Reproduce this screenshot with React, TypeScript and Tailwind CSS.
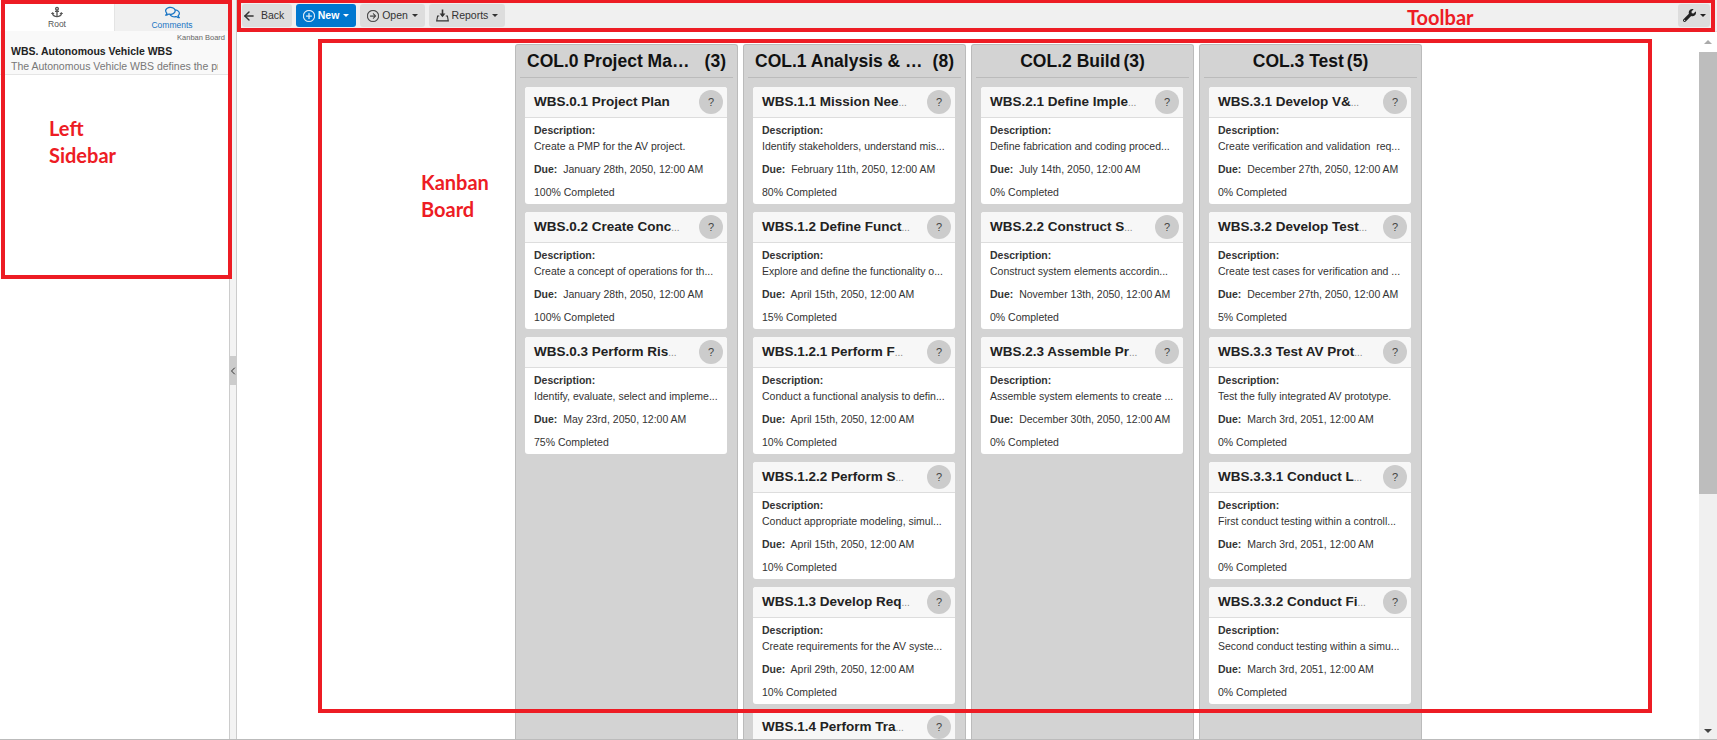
import React from "react";
import { ArrowLeft, ChevronLeft } from "lucide-react";
import { BsArrowRightCircle, BsPlusCircle } from "react-icons/bs";
import { FaAnchor, FaRegComments, FaWrench } from "react-icons/fa";

type CardData = {
    title: string;
    clipped?: boolean;
    description?: string;
    due?: string;
    percent?: number;
};

type ColumnData = {
    title: string;
    count: number;
    long?: boolean;
    cards: CardData[];
};

const columns: ColumnData[] = [
    {
        title: "COL.0 Project Ma…",
        count: 3,
        long: true,
        cards: [
            { title: "WBS.0.1 Project Plan", description: "Create a PMP for the AV project.", due: "January 28th, 2050, 12:00 AM", percent: 100 },
            { title: "WBS.0.2 Create Conc", clipped: true, description: "Create a concept of operations for th...", due: "January 28th, 2050, 12:00 AM", percent: 100 },
            { title: "WBS.0.3 Perform Ris", clipped: true, description: "Identify, evaluate, select and impleme...", due: "May 23rd, 2050, 12:00 AM", percent: 75 },
        ],
    },
    {
        title: "COL.1 Analysis & …",
        count: 8,
        long: true,
        cards: [
            { title: "WBS.1.1 Mission Nee", clipped: true, description: "Identify stakeholders, understand mis...", due: "February 11th, 2050, 12:00 AM", percent: 80 },
            { title: "WBS.1.2 Define Funct", clipped: true, description: "Explore and define the functionality o...", due: "April 15th, 2050, 12:00 AM", percent: 15 },
            { title: "WBS.1.2.1 Perform F", clipped: true, description: "Conduct a functional analysis to defin...", due: "April 15th, 2050, 12:00 AM", percent: 10 },
            { title: "WBS.1.2.2 Perform S", clipped: true, description: "Conduct appropriate modeling, simul...", due: "April 15th, 2050, 12:00 AM", percent: 10 },
            { title: "WBS.1.3 Develop Req", clipped: true, description: "Create requirements for the AV syste...", due: "April 29th, 2050, 12:00 AM", percent: 10 },
            { title: "WBS.1.4 Perform Tra", clipped: true },
        ],
    },
    {
        title: "COL.2 Build",
        count: 3,
        cards: [
            { title: "WBS.2.1 Define Imple", clipped: true, description: "Define fabrication and coding proced...", due: "July 14th, 2050, 12:00 AM", percent: 0 },
            { title: "WBS.2.2 Construct S", clipped: true, description: "Construct system elements accordin...", due: "November 13th, 2050, 12:00 AM", percent: 0 },
            { title: "WBS.2.3 Assemble Pr", clipped: true, description: "Assemble system elements to create ...", due: "December 30th, 2050, 12:00 AM", percent: 0 },
        ],
    },
    {
        title: "COL.3 Test",
        count: 5,
        cards: [
            { title: "WBS.3.1 Develop V&", clipped: true, description: "Create verification and validation  req...", due: "December 27th, 2050, 12:00 AM", percent: 0 },
            { title: "WBS.3.2 Develop Test", clipped: true, description: "Create test cases for verification and ...", due: "December 27th, 2050, 12:00 AM", percent: 5 },
            { title: "WBS.3.3 Test AV Prot", clipped: true, description: "Test the fully integrated AV prototype.", due: "March 3rd, 2051, 12:00 AM", percent: 0 },
            { title: "WBS.3.3.1 Conduct L", clipped: true, description: "First conduct testing within a controll...", due: "March 3rd, 2051, 12:00 AM", percent: 0 },
            { title: "WBS.3.3.2 Conduct Fi", clipped: true, description: "Second conduct testing within a simu...", due: "March 3rd, 2051, 12:00 AM", percent: 0 },
        ],
    },
];

function Caret() {
    return <span className="ml-[4px] h-0 w-0 border-x-[3px] border-t-[3px] border-x-transparent border-t-current" />;
}

function TrayIcon() {
    return (
        <svg width="13" height="13" viewBox="0 0 13 13" className="mr-[3px] shrink-0">
            <path d="M6.5 0.5V7" stroke="currentColor" strokeWidth="1.6" fill="none" />
            <path d="M3.6 4.6L6.5 8.2L9.4 4.6Z" fill="currentColor" />
            <path d="M3.2 7H1.6L0.7 11.9H12.3L11.4 7H9.8" stroke="currentColor" strokeWidth="1.1" fill="none" />
        </svg>
    );
}

function ToolButton({ className, children }: { className: string; children: React.ReactNode }) {
    return (
        <button className={`flex h-[23px] items-center rounded-[3px] text-[10.5px] ${className}`}>
            {children}
        </button>
    );
}

function KanbanCard({ card }: { card: CardData }) {
    return (
        <div className="mb-2 h-[117px] shrink-0 overflow-hidden rounded-[3px] bg-white text-[#333]">
            <div className="flex h-[31px] items-center border-b border-[#ddd] bg-[#f7f7f7] pr-[4px] pl-[9px]">
                <div className="text-[13.5px] font-bold whitespace-nowrap text-[#222]">
                    {card.title}
                    {card.clipped && <span className="text-[10px] font-normal text-[#888]">...</span>}
                </div>
                <div className="ml-auto flex h-[24px] w-[24px] shrink-0 items-center justify-center rounded-full bg-[#ccc] text-[11px] text-[#444]">
                    ?
                </div>
            </div>
            {card.due && (
                <div className="px-[9px] pt-[4px] text-[10.5px]">
                    <div className="h-[16px] leading-[16px] font-bold">Description:</div>
                    <div className="h-[16px] leading-[16px] whitespace-pre">{card.description}</div>
                    <div className="mt-[7px] h-[16px] leading-[16px] whitespace-pre">
                        <span className="font-bold">Due:</span>
                        {"  "}
                        {card.due}
                    </div>
                    <div className="mt-[7px] h-[16px] leading-[16px]">{card.percent}% Completed</div>
                </div>
            )}
        </div>
    );
}

function KanbanColumn({ column }: { column: ColumnData }) {
    return (
        <div className="flex h-[696px] w-[223px] shrink-0 flex-col overflow-hidden rounded-t-[3px] border-x border-t border-[#bbb] bg-[#d3d3d3]">
            <div
                className={`mx-[4px] mb-[9px] flex h-[33px] shrink-0 items-center border-b border-[#bbb] px-[7px] text-[17.5px] font-bold whitespace-nowrap text-[#111] ${
                    column.long ? "justify-between" : "justify-center gap-[3px]"
                }`}
            >
                <span>{column.title}</span>
                <span>({column.count})</span>
            </div>
            <div className="flex flex-col pr-[10px] pl-[9px]">
                {column.cards.map((card) => (
                    <KanbanCard key={card.title} card={card} />
                ))}
            </div>
        </div>
    );
}

function Outline({ className }: { className: string }) {
    return <div className={`pointer-events-none absolute border-[4px] border-[#ed1c24] ${className}`} />;
}

function Label({ className, children }: { className: string; children: React.ReactNode }) {
    return (
        <div className={`pointer-events-none absolute text-[20px] leading-[27px] font-bold text-[#ed1c24] [font-family:Lato,sans-serif] ${className}`}>
            {children}
        </div>
    );
}

export default function App() {
    return (
        <div className="relative flex h-[740px] w-[1717px] overflow-hidden border-b border-[#bbb] bg-white [font-family:'Liberation_Sans',Arial,sans-serif]">
            <aside className="w-[229px] shrink-0 bg-white">
                <div className="flex h-[31px]">
                    <div className="flex w-[114px] flex-col items-center pt-[6px] text-[#555]">
                        <FaAnchor size={12} />
                        <span className="mt-[1px] text-[8.5px] leading-[10px]">Root</span>
                    </div>
                    <div className="flex w-[115px] flex-col items-center border-l border-[#e4e4e4] bg-[#f0f0f0] pt-[5px] text-[#1a75c4]">
                        <FaRegComments size={15} />
                        <span className="text-[8.5px] leading-[10px]">Comments</span>
                    </div>
                </div>
                <div className="h-[44px] border-b border-[#e5e5e5] bg-[#f9f9f9]">
                    <div className="pt-[2px] pr-[4px] text-right text-[7.5px] leading-[9px] text-[#666]">Kanban Board</div>
                    <div className="pl-[11px] text-[10.5px] leading-[18px] font-bold text-[#222]">WBS. Autonomous Vehicle WBS</div>
                    <div className="w-[218px] overflow-hidden pl-[11px] text-[10.5px] leading-[13px] whitespace-nowrap text-[#777]">
                        The Autonomous Vehicle WBS defines the project
                    </div>
                </div>
            </aside>

            <div className="flex w-[8px] shrink-0 flex-col border-x border-[#ccc] bg-[#f3f3f3]">
                <div className="mt-[356px] flex h-[29px] items-center justify-center overflow-visible bg-[#ccc] text-[#333]">
                    <ChevronLeft size={12} strokeWidth={2} className="shrink-0" />
                </div>
            </div>

            <main className="flex min-w-0 flex-1 flex-col">
                <div className="flex h-[32px] shrink-0 items-start gap-[4px] border-b border-[#e4e4e4] bg-[#f0f0f0] pt-[4px] pr-[7px] pl-[5px]">
                    <ToolButton className="w-[50px] bg-[#ddd] text-[#333]">
                        <ArrowLeft size={14} strokeWidth={2.5} className="mr-[5px] shrink-0" />
                        Back
                    </ToolButton>
                    <ToolButton className="w-[60px] justify-center bg-[#0078d0] font-bold text-white">
                        <BsPlusCircle size={12} stroke="currentColor" strokeWidth={0.4} className="mr-[3px] shrink-0" />
                        New
                        <Caret />
                    </ToolButton>
                    <ToolButton className="w-[65px] justify-center bg-[#ddd] text-[#333]">
                        <BsArrowRightCircle size={12} stroke="currentColor" strokeWidth={0.4} className="mr-[3px] shrink-0" />
                        Open
                        <Caret />
                    </ToolButton>
                    <ToolButton className="w-[76px] justify-center bg-[#ddd] text-[#333]">
                        <TrayIcon />
                        Reports
                        <Caret />
                    </ToolButton>
                    <ToolButton className="ml-auto w-[32px] justify-center bg-[#ddd] text-[#222]">
                        <FaWrench size={13} />
                        <Caret />
                    </ToolButton>
                </div>

                <div className="flex min-h-0 flex-1">
                    <div className="flex min-w-0 flex-1 gap-[5px] overflow-hidden pt-[12px] pl-[278px]">
                        {columns.map((column) => (
                            <KanbanColumn key={column.title} column={column} />
                        ))}
                    </div>
                    <div className="flex w-[18px] shrink-0 flex-col items-center bg-[#f0f0f0]">
                        <div className="flex h-[20px] w-full items-center justify-center bg-white">
                            <div className="h-0 w-0 border-x-[4px] border-b-[4px] border-x-transparent border-b-[#aaa]" />
                        </div>
                        <div className="h-[442px] w-full bg-[#bdbdbd]" />
                        <div className="mt-auto mb-[6px] h-0 w-0 border-x-[4px] border-t-[4px] border-x-transparent border-t-[#444]" />
                    </div>
                </div>
            </main>

            <Outline className="top-[0px] left-[1px] h-[279px] w-[231px]" />
            <Outline className="top-[-1px] left-[237px] h-[33px] w-[1478px]" />
            <Outline className="top-[39px] left-[318px] h-[674px] w-[1334px]" />
            <Label className="top-[115px] left-[49px]">
                Left
                <br />
                Sidebar
            </Label>
            <Label className="top-[169px] left-[421px]">
                Kanban
                <br />
                Board
            </Label>
            <Label className="top-[4px] left-[1407px]">Toolbar</Label>
        </div>
    );
}
